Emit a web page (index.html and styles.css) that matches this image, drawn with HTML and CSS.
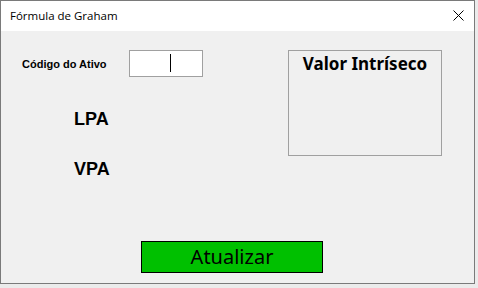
FILE: index.html
```html
<!DOCTYPE html>
<html lang="pt">
<head>
<meta charset="utf-8">
<link rel="stylesheet" href="styles.css">
</head>
<body>
<div class="window">
  <div class="titlebar">
    <span class="title">Fórmula de Graham</span>
    <svg class="close" width="11" height="11" viewBox="0 0 11 11"><path d="M0.5 0.5 L10.5 10.5 M10.5 0.5 L0.5 10.5" stroke="#000" stroke-width="1"/></svg>
  </div>
  <div class="content">
    <div class="left">
      <div class="code-row">
        <span class="code-label">Código do Ativo</span>
        <div class="input"><span class="caret"></span></div>
      </div>
      <div class="big-label lpa">LPA</div>
      <div class="big-label vpa">VPA</div>
    </div>
    <div class="right">
      <div class="value-box">Valor Intríseco</div>
    </div>
    <div class="footer">
      <button class="update">Atualizar</button>
    </div>
  </div>
</div>
</body>
</html>
```
FILE: styles.css
```css
html, body {
  margin: 0;
  padding: 0;
  background: #ebebeb;
}
body {
  width: 478px;
  height: 288px;
  overflow: hidden;
}
.window {
  box-sizing: border-box;
  width: 475px;
  height: 284px;
  border: 1px solid #7a7a7a;
  background: #f0f0f0;
  display: flex;
  flex-direction: column;
}
.titlebar {
  height: 30px;
  background: #fff;
  display: flex;
  align-items: center;
  justify-content: space-between;
  padding: 0 10px 0 9px;
  flex-shrink: 0;
}
.title {
  font-family: "Open Sans", "Noto Sans", sans-serif;
  font-size: 11.5px;
  color: #000;
  margin-top: -1px;
}
.close {
  display: block;
  margin-top: -1px;
}
.content {
  flex: 1;
  display: grid;
  grid-template-columns: 286px 1fr;
  grid-template-rows: 1fr auto;
}
.left {
  padding-top: 19px;
  padding-left: 21px;
}
.code-row {
  display: flex;
  align-items: center;
  height: 27px;
}
.code-label {
  font-family: "Liberation Sans", Arial, sans-serif;
  font-weight: bold;
  font-size: 11px;
  width: 107px;
  color: #000;
}
.input {
  box-sizing: border-box;
  width: 74px;
  height: 27px;
  background: #fff;
  border: 1px solid #a0a0a0;
  position: relative;
}
.caret {
  position: absolute;
  left: 40px;
  top: 3px;
  width: 1px;
  height: 18px;
  background: #000;
}
.big-label {
  font-family: "Liberation Sans", Arial, sans-serif;
  font-weight: bold;
  font-size: 18px;
  color: #000;
  margin-left: 52px;
  line-height: 20px;
}
.lpa { margin-top: 32px; }
.vpa { margin-top: 30px; }
.right {
  padding-top: 19px;
  padding-left: 1px;
}
.value-box {
  box-sizing: border-box;
  width: 154px;
  height: 106px;
  border: 1px solid #a0a0a0;
  font-family: "Noto Sans", "Open Sans", sans-serif;
  font-weight: bold;
  font-size: 17px;
  text-align: center;
  padding-top: 2px;
  line-height: 22px;
  color: #000;
}
.footer {
  grid-column: 1 / 3;
  padding-left: 140px;
  padding-bottom: 10px;
}
.update {
  box-sizing: border-box;
  width: 182px;
  height: 32px;
  background: #00c000;
  border: 1px solid #000;
  font-family: "Noto Sans", "Open Sans", sans-serif;
  font-size: 20px;
  color: #000;
  padding: 0;
  line-height: 28px;
}
```
